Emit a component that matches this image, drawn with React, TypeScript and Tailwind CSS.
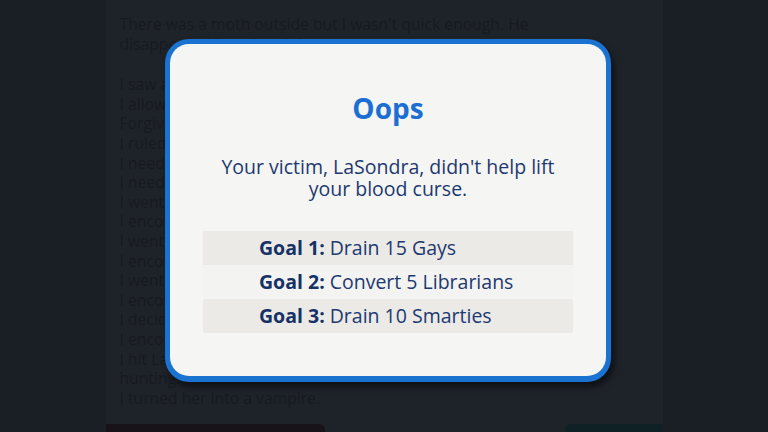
import React from "react";

const storyLines: string[] = [
  "There was a moth outside but I wasn't quick enough. He",
  "disappeared into the night.",
  "",
  "I saw a Gay walking alone in the park.",
  "I allowed her to pass by.",
  "Forgiveness is not my strong suit.",
  "I ruled the night.",
  "I needed to feed.",
  "I needed more blood.",
  "I went hunting.",
  "I encountered a Librarian.",
  "I went hunting.",
  "I encountered a Smartie.",
  "I went hunting.",
  "I encountered LaSondra.",
  "I decided to feed on her.",
  "I encountered her at the club.",
  "I hit LaSondra with my charm after a night of",
  "hunting.",
  "I turned her into a vampire.",
];

const goals = [
  { label: "Goal 1:", text: "Drain 15 Gays", shade: "bg-[#ebeae7]" },
  { label: "Goal 2:", text: "Convert 5 Librarians", shade: "bg-[#f3f3f1]" },
  { label: "Goal 3:", text: "Drain 10 Smarties", shade: "bg-[#ebeae7]" },
];

export default function App() {
  return (
    <div
      className="relative w-[768px] h-[432px] overflow-hidden bg-[#1a1e25] flex justify-center"
      style={{ fontFamily: "'Open Sans', Lato, sans-serif" }}
    >
      {/* dimmed story column */}
      <div className="w-[557px] h-full bg-[#1e232a] flex flex-col">
        <div className="px-[14px] pt-[15px] text-[15.7px] leading-[19.6px] text-[#161a20] flex-1">
          {storyLines.map((line, i) =>
            line ? (
              <div key={i} className="whitespace-nowrap">
                {line}
              </div>
            ) : (
              <div key={i} className="h-[21px]" />
            )
          )}
        </div>
        <div className="flex justify-between h-[8px]">
          <div className="w-[219px] h-full bg-[#171318] rounded-tr-[6px]" />
          <div className="w-[98px] h-full bg-[#0f2125] rounded-tl-[6px]" />
        </div>
      </div>

      {/* result dialog */}
      <div className="absolute left-[165px] top-[39px] w-[446px] h-[343px] rounded-[24px] bg-[#1a73d0] p-[5px] pb-[6px] shadow-[3px_5px_6px_rgba(0,0,0,0.55)]">
        <div className="w-full h-full rounded-[19px] bg-[#f5f5f3] flex flex-col items-center">
          <div className="mt-[48px] text-[28px] leading-[32px] font-bold text-[#1c6fd2]">
            Oops
          </div>
          <div className="mt-[32px] text-center text-[19.5px] leading-[22px] text-[#1d3970]">
            <div>Your victim, LaSondra, didn't help lift</div>
            <div>your blood curse.</div>
          </div>
          <div className="mt-[31px] w-[370px] flex flex-col">
            {goals.map((g) => (
              <div
                key={g.label}
                className={`${g.shade} h-[34px] flex items-center pl-[56px] text-[19.5px] text-[#1d3970]`}
              >
                <span className="font-bold text-[#163166] mr-[5px]">{g.label}</span>
                <span>{g.text}</span>
              </div>
            ))}
          </div>
        </div>
      </div>
    </div>
  );
}
